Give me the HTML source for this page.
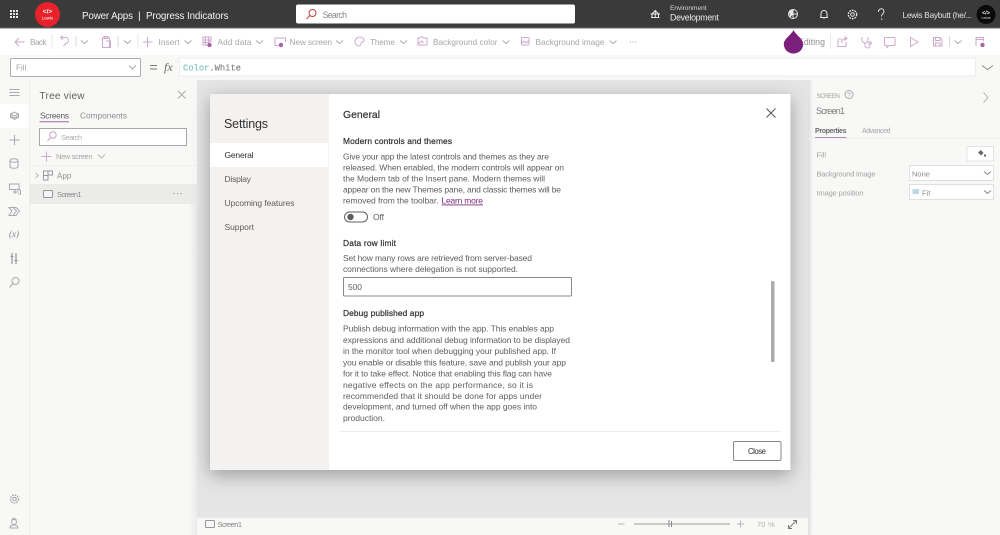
<!DOCTYPE html>
<html lang="en"><head><meta charset="utf-8"><title>Power Apps | Progress Indicators</title>
<style>
html,body{margin:0;padding:0;width:1000px;height:535px;overflow:hidden;background:#f8f8f7}
svg{display:block;font-family:"Liberation Sans",sans-serif;filter:blur(.3px)}
.b{font-size:8.5px;fill:#605e5c}
.h{font-size:8.4px;fill:#323130;stroke:#323130;stroke-width:.22}
.t{font-size:8.3px;fill:#a6a6a6}
.n{font-size:8.5px;fill:#605e5c}
.ic{fill:none;stroke:#cda9cd;stroke-width:1}
.gi{fill:none;stroke:#a9a9a9;stroke-width:1}
.wi{fill:none;stroke:#e6e6e6;stroke-width:1}
</style></head><body>
<svg width="1000" height="535" viewBox="0 0 1000 535" xmlns="http://www.w3.org/2000/svg">
<defs>
<filter id="sh" x="-15%" y="-20%" width="130%" height="140%"><feDropShadow dx="0" dy="5" stdDeviation="9" flood-color="#000" flood-opacity=".32"/></filter>
<linearGradient id="ps" x1="0" x2="1" y1="0" y2="0"><stop offset="0" stop-color="#dedede"/><stop offset="1" stop-color="#f8f8f7"/></linearGradient>
<linearGradient id="ts" x1="0" x2="1" y1="0" y2="0"><stop offset="0" stop-color="#f8f8f7"/><stop offset="1" stop-color="#ebebeb"/></linearGradient>
</defs>
<rect width="1000" height="535" fill="#f8f8f7"/>
<!-- top bar -->
<rect width="1000" height="28" fill="#3a3a3a"/>
<g fill="#e8e8e8"><rect x="10" y="10" width="2" height="2"/><rect x="13" y="10" width="2" height="2"/><rect x="16" y="10" width="2" height="2"/><rect x="10" y="13" width="2" height="2"/><rect x="13" y="13" width="2" height="2"/><rect x="16" y="13" width="2" height="2"/><rect x="10" y="16" width="2" height="2"/><rect x="13" y="16" width="2" height="2"/><rect x="16" y="16" width="2" height="2"/></g>
<circle cx="47.5" cy="14.5" r="12.5" fill="#e8212b"/>
<text x="47.5" y="13.5" text-anchor="middle" font-size="6.5" font-weight="bold" fill="#fff">&lt;/&gt;</text>
<text x="47.5" y="19.5" text-anchor="middle" font-size="4.5" fill="#fff">Lewis</text>
<text x="82" y="19" font-size="9.8" fill="#f2f2f2" textLength="51" lengthAdjust="spacing">Power Apps</text>
<text x="138" y="19" font-size="10.5" fill="#f2f2f2">|</text>
<text x="146" y="19" font-size="9.8" fill="#f2f2f2" textLength="82.500" lengthAdjust="spacing">Progress Indicators</text>
<rect x="296" y="4.500" width="279" height="19" rx="2" fill="#fff"/>
<circle cx="312.500" cy="13" r="3.500" fill="none" stroke="#c8413c" stroke-width="1"/><path d="M310 15.500 306.500 19" stroke="#c8413c" stroke-width="1"/>
<text x="322.500" y="18" font-size="8.800" fill="#8a8886" textLength="24.500" lengthAdjust="spacing">Search</text>
<path d="M651 17.500h8.500M652 17.500v-3.500l3.250-3.500 3.250 3.500v3.500M650.500 14h9.500M655.250 10.500v7" class="wi"/>
<text x="670" y="10" font-size="6.500" fill="#d8d8d8" textLength="36.500" lengthAdjust="spacing">Environment</text>
<text x="670" y="20.500" font-size="8.800" fill="#e8e8e8" textLength="49" lengthAdjust="spacing">Development</text>
<circle cx="793" cy="14" r="4.500" class="wi"/><path d="M793 9.500v9M793 14h5" class="wi"/><path d="M789 11l4-1.500v5l-3 3z" fill="#e6e6e6"/>
<path d="M820 17.500h8M821 17.500v-4a3 3 0 0 1 6 0v4M823.500 18.500h1" class="wi"/>
<circle cx="852.500" cy="14.500" r="1.800" class="wi"/><circle cx="852.500" cy="14.500" r="4.200" fill="none" stroke="#e6e6e6" stroke-width="1.300" stroke-dasharray="1.800 .9"/>
<path d="M878.500 12c0-4.500 5.500-4 5.500-.5 0 2-2.500 2.500-2.500 5" class="wi"/><rect x="881" y="18.500" width="1.200" height="1.200" fill="#e6e6e6"/>
<text x="902.500" y="18" font-size="8.300" fill="#e0e0e0" textLength="69.500" lengthAdjust="spacing">Lewis Baybutt (he/...</text>
<circle cx="986" cy="14.500" r="9.500" fill="#0a0a0a"/>
<text x="986" y="14.500" text-anchor="middle" font-size="5.500" font-weight="bold" fill="#fff">&lt;/&gt;</text>
<text x="986" y="19" text-anchor="middle" font-size="3.500" fill="#ddd">Lewis</text>
<!-- toolbar -->
<rect y="28" width="1000" height="27" fill="#fff"/>
<rect y="27.500" width="1000" height="1" fill="#6b6b6b"/>
<path d="M15 42h9.500M15 42l4-4M15 42l4 4" class="ic"/>
<text x="30" y="45" class="t" textLength="16.500" lengthAdjust="spacing">Back</text>
<rect x="51.500" y="34" width="1" height="15" fill="#e8e8e8"/>
<path d="M60.500 37.500h5a3 3 0 0 1 0 6l-2 3M60.500 37.500l2.500-2M60.500 37.500l2.500 2.500" class="ic"/>
<rect x="75.500" y="36" width="1" height="11" fill="#d8d8d8"/>
<path d="M81 40.500l3.500 3 3.500-3" class="gi"/>
<path d="M102.500 38h7v9.500h-7zM104 36.500h4v2h-4zM106 41h4.500v6.500H106" class="ic"/>
<rect x="117.500" y="36" width="1" height="11" fill="#d8d8d8"/>
<path d="M124 40.500l3.500 3 3.500-3" class="gi"/>
<rect x="137.500" y="34" width="1" height="15" fill="#e8e8e8"/>
<path d="M147.500 37v10M143 42h9.500" class="ic"/>
<text x="158.500" y="45" class="t" textLength="21" lengthAdjust="spacing">Insert</text>
<path d="M184.500 40.500l3.500 3 3.500-3" class="gi"/>
<path d="M203 37h8v4.500h-2.500v3.500H203zM203 40h8M203 42.500h5.500M205.500 37v8M208.500 37v4" class="ic"/><circle cx="209.500" cy="45" r="2.200" fill="#a864a8"/>
<text x="217.500" y="45" class="t" textLength="34" lengthAdjust="spacing">Add data</text>
<path d="M256 40.500l3.500 3 3.500-3" class="gi"/>
<path d="M280 45.500h-5v-7.500h10.500v4" class="ic"/><circle cx="281" cy="45" r="2.200" fill="#a864a8"/>
<text x="289.500" y="45" class="t" textLength="42.500" lengthAdjust="spacing">New screen</text>
<path d="M336 40.500l3.500 3 3.500-3" class="gi"/>
<path d="M355 42c0-6 9-6.500 9-1.500 0 2-3 1-3 3 0 1.500-1 2.500-2 2.500-2 0-4-2-4-4z" class="ic"/>
<text x="370" y="45" class="t" textLength="25" lengthAdjust="spacing">Theme</text>
<path d="M400 40.500l3.500 3 3.500-3" class="gi"/>
<path d="M418 38h2l2-1.500 2 1.500h3v7h-9zM418 44l3.500-3 2 2" class="ic"/>
<text x="433" y="45" class="t" textLength="64.500" lengthAdjust="spacing">Background color</text>
<path d="M502.500 40.500l3.500 3 3.500-3" class="gi"/>
<rect x="521.500" y="37.500" width="7.500" height="7.500" rx="1" class="ic"/><path d="M521.500 43.500l2.500-2.500 2 2 3-2.500" class="ic"/>
<text x="535.500" y="45" class="t" textLength="69" lengthAdjust="spacing">Background image</text>
<path d="M609.500 40.500l3.500 3 3.500-3" class="gi"/>
<g fill="#a6a6a6"><rect x="630" y="41.500" width="1" height="1"/><rect x="632.500" y="41.500" width="1" height="1"/><rect x="635" y="41.500" width="1" height="1"/></g>
<text x="798" y="45" font-size="8.800" fill="#8f8f8f" textLength="27" lengthAdjust="spacing">Editing</text>
<path d="M793.500 30c2 4.500 9.700 9 9.700 14 0 5.500-4.400 9.500-9.700 9.500s-9.700-4-9.700-9.500c0-5 7.700-9.500 9.700-14z" fill="#7a1f7c"/>
<rect x="830" y="34" width="1" height="15" fill="#e8e8e8"/>
<path d="M838.500 39h3M846 42v4.500h-8v-7M841.500 43c0-3 2-4.500 5-4.500M844.500 36.500l2.500 2-2.500 2" class="ic"/>
<path d="M862 37v3a3 3 0 0 0 6 0v-3M865 43v2.500a2.500 2.500 0 0 0 5 0v-1" class="ic"/><circle cx="870" cy="43" r="1.300" class="ic"/>
<path d="M885.500 37.500h8.500a1 1 0 0 1 1 1v6a1 1 0 0 1-1 1h-5l-2 2v-2h-1.500a1 1 0 0 1-1-1v-6a1 1 0 0 1 1-1z" class="ic"/>
<path d="M910.500 37.500l7.500 4.500-7.500 4.500z" class="ic"/>
<path d="M933.500 37.500h6.500l2 2v6.500h-8.500zM935.500 37.500v3h4.500v-3M935.500 46v-3h4.500v3" class="ic"/>
<rect x="949" y="36" width="1" height="11" fill="#d8d8d8"/>
<path d="M954.500 40.500l3.500 3 3.500-3" class="gi"/>
<path d="M976 46v-8.500h7.500v4M976 39.500h7.500" class="ic"/><circle cx="982.500" cy="45" r="2.200" fill="#a864a8"/>
<!-- formula bar -->
<rect y="55" width="1000" height="25" fill="#f8f8f7"/>
<rect x="10.500" y="58.500" width="130" height="18" rx="1" fill="#fff" stroke="#b0aeac"/>
<text x="16" y="70.500" font-size="8" fill="#a6a6a6">Fill</text>
<path d="M129 65.500l3.500 3.500 3.500-3.500" class="gi"/>
<path d="M150 65.500h7M150 69h7" stroke="#777" stroke-width="1"/>
<text x="164" y="71" font-family="Liberation Serif,serif" font-style="italic" font-size="12" fill="#666">fx</text>
<rect x="179.500" y="58" width="796" height="18" fill="#fff" stroke="#eeeeed"/>
<text x="183" y="70.500" font-family="Liberation Mono,monospace" font-size="8.800" fill="#76bcc0" stroke="#76bcc0" stroke-width=".1" textLength="58" lengthAdjust="spacing">Color<tspan fill="#7c7c7c" stroke="#7c7c7c">.White</tspan></text>
<path d="M982 65.500l5.500 4 5.500-4" fill="none" stroke="#8a8a8a"/>
<!-- rail + tree -->
<rect y="80" width="29" height="455" fill="#f8f8f7"/>
<rect x="29" y="80" width="1" height="455" fill="#eeeeed"/>
<rect y="104" width="29" height="24" fill="#fff"/>
<path d="M9.500 89.500h10M9.500 92.500h10M9.500 95.500h10" class="gi"/>
<path d="M10.500 114l4-2 4 2v3.500l-4 2-4-2zM10.500 114l4 2 4-2M10.500 116l4 2 4-2" class="gi"/>
<path d="M14.500 135v10M9.500 140h10" class="gi"/>
<ellipse cx="14" cy="160.500" rx="4" ry="1.800" class="gi"/><path d="M10 160.500v6c0 1 1.800 1.800 4 1.800s4-.8 4-1.800v-6" class="gi"/>
<path d="M9.500 184h9.500v5.500h-9.500zM13 192h5.500M15 189.500V194M17.500 190h3v4h-2" class="gi"/>
<path d="M9 207.500h7l3.500 3.500-3.500 4.500H9l3-4.500zM13 207.500l3.500 3.500-3.500 4.500" class="gi"/>
<text x="14" y="237" text-anchor="middle" font-family="Liberation Serif,serif" font-style="italic" font-size="9" fill="#888">(x)</text>
<path d="M12 253v11M16 253v11M10.500 256.500h3M14.500 260.500h3" fill="none" stroke="#999" stroke-width="1.200"/>
<circle cx="15.500" cy="281" r="3.500" class="gi"/><path d="M13 283.500l-3.500 4" class="gi"/>
<circle cx="14.500" cy="499" r="1.800" class="gi"/><circle cx="14.500" cy="499" r="4" fill="none" stroke="#a9a9a9" stroke-width="1.300" stroke-dasharray="1.800 .9"/>
<circle cx="14" cy="522" r="2.500" class="gi"/><path d="M10 528c0-2 1.500-3 4-3s4 1 4 3zM11.500 520l2.500-2 2.500 2" class="gi"/>
<rect x="30" y="80" width="167" height="455" fill="#f8f8f7"/>
<text x="39.500" y="99" font-size="10" fill="#5f5f5f" textLength="45" lengthAdjust="spacing">Tree view</text>
<path d="M178 91l7.500 7.500M185.500 91l-7.500 7.500" class="gi"/>
<text x="40" y="118.500" font-size="8.300" fill="#5a5a5a" textLength="29" lengthAdjust="spacing">Screens</text>
<rect x="39.500" y="121" width="29.500" height="1.300" fill="#b48bb5"/>
<text x="80" y="118.500" font-size="8.300" fill="#8c8c8c" textLength="47" lengthAdjust="spacing">Components</text>
<rect x="39.500" y="128.500" width="147" height="17" fill="#fff" stroke="#a8a8a8"/>
<circle cx="53" cy="135" r="3.200" fill="none" stroke="#c9a5c9"/><path d="M50.500 137.500l-3 3.500" stroke="#c9a5c9"/>
<text x="61" y="140" font-size="7.500" fill="#b0b0b0" textLength="21" lengthAdjust="spacing">Search</text>
<path d="M46.500 151.500v10M41.500 156.500h10" class="ic"/>
<text x="56" y="159" font-size="7.500" fill="#a6a6a6" textLength="36.500" lengthAdjust="spacing">New screen</text>
<path d="M98 154.500l3.500 3.500 3.500-3.500" fill="none" stroke="#bbb"/>
<rect x="30" y="165" width="167" height="1" fill="#efefee"/>
<path d="M35.500 173l3 2.500-3 2.500" fill="none" stroke="#bbb"/>
<path d="M43.500 171h9v4h-4.500v5h-4.500zM48 171v4M43.500 175.500h4.500" fill="none" stroke="#999"/>
<text x="57" y="178.500" font-size="8" fill="#8f8f8f">App</text>
<rect x="30" y="184" width="167" height="20" fill="#ebebea"/>
<rect x="43.500" y="190.500" width="9" height="7" rx=".5" fill="#f6f6f6" stroke="#999"/>
<text x="57" y="197" font-size="7.500" fill="#8a8a8a" textLength="24.500" lengthAdjust="spacing">Screen1</text>
<g fill="#888"><rect x="173.500" y="193" width="1" height="1"/><rect x="177" y="193" width="1" height="1"/><rect x="180.500" y="193" width="1" height="1"/></g>
<rect x="189" y="204" width="8" height="331" fill="url(#ts)"/>
<!-- canvas -->
<rect x="197" y="80" width="611" height="438" fill="#e5e5e5"/>
<rect x="197" y="518" width="611" height="17" fill="#f8f8f7"/>
<rect x="197" y="517.500" width="611" height=".7" fill="#ececec"/>
<rect x="205.500" y="520.500" width="9" height="7" rx=".5" fill="#f6f6f6" stroke="#999"/>
<text x="217.500" y="527" font-size="7.500" fill="#858585" textLength="24.500" lengthAdjust="spacing">Screen1</text>
<path d="M618 524h6.500M737 524h7M740.500 520.500v7" stroke="#b8b8b8"/>
<rect x="634" y="523.500" width="96" height="1" fill="#9e9e9e"/>
<rect x="668.500" y="520" width="1" height="7" fill="#888"/><rect x="671" y="521" width="1" height="6" fill="#888"/>
<text x="757" y="527" font-size="7.500" fill="#b0b0b0">70</text><text x="768" y="527" font-size="7.500" fill="#b0b0b0">%</text>
<path d="M788.500 528.500l8-8M788.500 525v3.500h3.500M793 520.500h3.500v3.500" fill="none" stroke="#777"/>
<!-- properties panel -->
<rect x="808" y="80" width="192" height="455" fill="#f8f8f7"/>
<rect x="808" y="80" width="5" height="455" fill="url(#ps)"/>
<text x="816.500" y="98" font-size="6.500" fill="#a3a3a3" textLength="23.500" lengthAdjust="spacing">SCREEN</text>
<circle cx="849" cy="94.500" r="4" fill="none" stroke="#a8a8a8"/><text x="849" y="97" text-anchor="middle" font-size="6.500" fill="#999">?</text>
<path d="M983.500 92.500l4.500 5-4.500 5" fill="none" stroke="#b8b8b8"/>
<text x="816" y="114" font-size="9" fill="#7b7b7b" textLength="29" lengthAdjust="spacing">Screen1</text>
<text x="815" y="133" font-size="7" font-weight="bold" fill="#6c6c6c" textLength="31.500" lengthAdjust="spacing">Properties</text>
<rect x="815" y="137" width="31.500" height="1.200" fill="#b48bb5"/>
<text x="862" y="133" font-size="7" fill="#a3a3a3" textLength="28.500" lengthAdjust="spacing">Advanced</text>
<rect x="808" y="138" width="192" height="1" fill="#efefee"/>
<text x="816.500" y="157.500" font-size="7.500" fill="#a3a3a3">Fill</text>
<rect x="967" y="146.500" width="26.500" height="14.500" fill="#fff" stroke="#e4e4e4"/>
<path d="M978 152.500l3-2.500 2.500 3-2.500 2.500z" fill="#666"/><rect x="984" y="154.500" width="2" height="2" fill="#666"/>
<text x="816.500" y="176.500" font-size="7.500" fill="#a3a3a3" textLength="59" lengthAdjust="spacing">Background image</text>
<rect x="909.500" y="165.500" width="84" height="15" fill="#fff" stroke="#e0e0e0"/>
<text x="912" y="176.500" font-size="7.500" fill="#8c8c8c">None</text>
<path d="M984 171.500l3.500 3 3.500-3" fill="none" stroke="#888"/>
<text x="816.500" y="195.500" font-size="7.500" fill="#a3a3a3" textLength="47" lengthAdjust="spacing">Image position</text>
<rect x="909.500" y="184.500" width="84" height="15" fill="#fff" stroke="#e0e0e0"/>
<rect x="912.500" y="189" width="6.500" height="5" fill="#bcd8e6"/>
<text x="922" y="195.500" font-size="7.500" fill="#8c8c8c">Fit</text>
<path d="M984 190.500l3.500 3 3.500-3" fill="none" stroke="#888"/>
<!-- dialog -->
<rect x="210" y="94" width="580.500" height="376" fill="#fff" filter="url(#sh)"/>
<rect x="210" y="94" width="119" height="376" fill="#f3f2f1"/>
<text x="224" y="128" font-size="12.500" fill="#323130" textLength="44" lengthAdjust="spacing">Settings</text>
<rect x="210" y="143" width="118" height="24" fill="#fff"/>
<text x="224.500" y="158" class="n" style="fill:#323130" textLength="29" lengthAdjust="spacing">General</text>
<text x="224.500" y="182" class="n" textLength="26.500" lengthAdjust="spacing">Display</text>
<text x="224.500" y="206" class="n" textLength="70" lengthAdjust="spacing">Upcoming features</text>
<text x="224.500" y="230" class="n" textLength="29.500" lengthAdjust="spacing">Support</text>
<text x="343" y="118" font-size="10.400" fill="#323130" stroke="#323130" stroke-width=".2" textLength="37" lengthAdjust="spacing">General</text>
<path d="M766.500 108.500l9 9M775.500 108.500l-9 9" fill="none" stroke="#555"/>
<text x="343" y="144" class="h" textLength="109" lengthAdjust="spacing">Modern controls and themes</text>
<text x="343" y="159.500" class="b" textLength="206" lengthAdjust="spacing">Give your app the latest controls and themes as they are</text>
<text x="343" y="170.500" class="b" textLength="221" lengthAdjust="spacing">released. When enabled, the modern controls will appear on</text>
<text x="343" y="181.500" class="b" textLength="202" lengthAdjust="spacing">the Modern tab of the Insert pane. Modern themes will</text>
<text x="343" y="192.500" class="b" textLength="218" lengthAdjust="spacing">appear on the new Themes pane, and classic themes will be</text>
<text x="343" y="203.500" class="b" textLength="95.500" lengthAdjust="spacing">removed from the toolbar.</text>
<text x="441.500" y="203.500" class="b" style="fill:#7b2a7d;text-decoration:underline" textLength="41.500" lengthAdjust="spacing">Learn more</text>
<rect x="344.500" y="212" width="23" height="10" rx="5" fill="#fff" stroke="#605e5c"/>
<circle cx="350.500" cy="217" r="3.200" fill="#605e5c"/>
<text x="373" y="220" class="b" textLength="11" lengthAdjust="spacing">Off</text>
<text x="343" y="246" class="h" textLength="53" lengthAdjust="spacing">Data row limit</text>
<text x="343" y="261" class="b" textLength="189" lengthAdjust="spacing">Set how many rows are retrieved from server-based</text>
<text x="343" y="272" class="b" textLength="175" lengthAdjust="spacing">connections where delegation is not supported.</text>
<rect x="343.500" y="277.500" width="228" height="18.500" rx="1" fill="#fff" stroke="#8a8886"/>
<text x="348" y="290" class="b" textLength="14" lengthAdjust="spacing">500</text>
<text x="343" y="316" class="h" textLength="81" lengthAdjust="spacing">Debug published app</text>
<text x="343" y="331.300" class="b" textLength="211" lengthAdjust="spacing">Publish debug information with the app. This enables app</text>
<text x="343" y="343" class="b" textLength="227" lengthAdjust="spacing">expressions and additional debug information to be displayed</text>
<text x="343" y="354" class="b" textLength="213" lengthAdjust="spacing">in the monitor tool when debugging your published app. If</text>
<text x="343" y="365.300" class="b" textLength="223" lengthAdjust="spacing">you enable or disable this feature, save and publish your app</text>
<text x="343" y="376.700" class="b" textLength="209" lengthAdjust="spacing">for it to take effect. Notice that enabling this flag can have</text>
<text x="343" y="388" class="b" textLength="190" lengthAdjust="spacing">negative effects on the app performance, so it is</text>
<text x="343" y="399" class="b" textLength="199" lengthAdjust="spacing">recommended that it should be done for apps under</text>
<text x="343" y="409.700" class="b" textLength="194" lengthAdjust="spacing">development, and turned off when the app goes into</text>
<text x="343" y="421" class="b" textLength="42" lengthAdjust="spacing">production.</text>
<rect x="771" y="281" width="3.500" height="81" rx="1" fill="#ababab"/>
<rect x="339" y="431" width="442" height="1" fill="#eeeeee"/>
<rect x="733.500" y="441.500" width="47.500" height="19" rx="1.500" fill="#fff" stroke="#8a8886"/>
<text x="757" y="454" text-anchor="middle" font-size="7.800" fill="#323130" textLength="18" lengthAdjust="spacing">Close</text>
</svg>
</body></html>
